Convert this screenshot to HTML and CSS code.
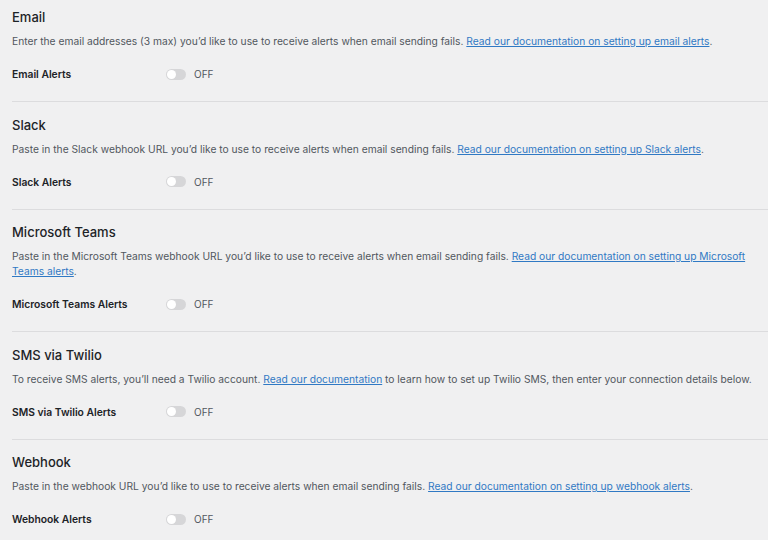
FILE: index.html
```html
<!DOCTYPE html>
<html>
<head>
<meta charset="utf-8">
<link rel="stylesheet" href="styles.css">
</head>
<body>
<div class="page">
  <section class="sec">
    <h2 class="title">Email</h2>
    <p class="desc">Enter the email addresses (3 max) you’d like to use to receive alerts when email sending fails. <a href="#">Read our documentation on setting up email alerts</a>.</p>
    <div class="row"><span class="label">Email Alerts</span><span class="toggle"><span class="track"><span class="knob"></span></span><span class="state">OFF</span></span></div>
  </section>
  <section class="sec">
    <h2 class="title">Slack</h2>
    <p class="desc">Paste in the Slack webhook URL you’d like to use to receive alerts when email sending fails. <a href="#">Read our documentation on setting up Slack alerts</a>.</p>
    <div class="row"><span class="label">Slack Alerts</span><span class="toggle"><span class="track"><span class="knob"></span></span><span class="state">OFF</span></span></div>
  </section>
  <section class="sec">
    <h2 class="title">Microsoft Teams</h2>
    <p class="desc">Paste in the Microsoft Teams webhook URL you’d like to use to receive alerts when email sending fails. <a href="#">Read our documentation on setting up Microsoft Teams alerts</a>.</p>
    <div class="row"><span class="label">Microsoft Teams Alerts</span><span class="toggle"><span class="track"><span class="knob"></span></span><span class="state">OFF</span></span></div>
  </section>
  <section class="sec">
    <h2 class="title">SMS via Twilio</h2>
    <p class="desc">To receive SMS alerts, you’ll need a Twilio account. <a href="#">Read our documentation</a> to learn how to set up Twilio SMS, then enter your connection details below.</p>
    <div class="row"><span class="label">SMS via Twilio Alerts</span><span class="toggle"><span class="track"><span class="knob"></span></span><span class="state">OFF</span></span></div>
  </section>
  <section class="sec">
    <h2 class="title">Webhook</h2>
    <p class="desc">Paste in the webhook URL you’d like to use to receive alerts when email sending fails. <a href="#">Read our documentation on setting up webhook alerts</a>.</p>
    <div class="row"><span class="label">Webhook Alerts</span><span class="toggle"><span class="track"><span class="knob"></span></span><span class="state">OFF</span></span></div>
  </section>
</div>
</body>
</html>
```

FILE: styles.css
```css
html, body {
  margin: 0;
  padding: 0;
  background: #f0f0f1;
}
body {
  font-family: Inter, "Liberation Sans", Arial, sans-serif;
  color: #1d2327;
  overflow: hidden;
}
.page {
  padding: 8px 12px 0 12px;
}
.sec {
  border-bottom: 1px solid #dcdcde;
  padding-bottom: 19px;
  margin-bottom: 13.5px;
  margin-right: -12px;
  padding-right: 12px;
}
.title {
  margin: 0;
  font-size: 13px;
  font-weight: 500;
  line-height: 18px;
  color: #1d2327;
}
.desc {
  margin: 8px 0 0 0;
  font-size: 10.25px;
  line-height: 15px;
  color: #50575e;
}
.desc a {
  color: #3079c4;
  text-decoration: underline;
}
.row {
  display: flex;
  align-items: center;
  margin-top: 17px;
  height: 16px;
}
.label {
  width: 154px;
  font-size: 10.3px;
  font-weight: 600;
  color: #1d2327;
}
.toggle {
  display: flex;
  align-items: center;
  gap: 8px;
}
.track {
  width: 20px;
  height: 11px;
  border-radius: 6px;
  background: #d6d6d8;
  display: flex;
  align-items: center;
  padding: 0 1px;
  box-sizing: border-box;
}
.knob {
  width: 9px;
  height: 9px;
  border-radius: 50%;
  background: #fff;
}
.state {
  font-size: 10px;
  color: #50575e;
}
```
